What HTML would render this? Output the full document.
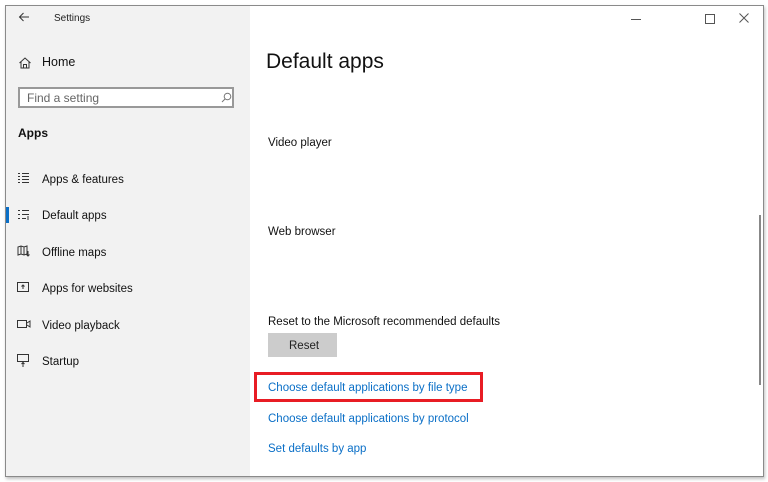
<!DOCTYPE html>
<html><head><meta charset="utf-8"><style>
body{margin:0;width:768px;height:482px;background:#fff;position:relative;overflow:hidden;font-family:"Liberation Sans",sans-serif;}
.win{position:absolute;left:5px;top:5px;width:757px;height:470px;border:1px solid #8a8a8a;background:#fff;box-shadow:1px 2px 3px rgba(0,0,0,.25);}
.side{position:absolute;left:6px;top:6px;width:244px;height:470px;background:#f2f2f2;}
.t{position:absolute;white-space:nowrap;color:#111;}
.s{font-size:11.5px;margin-top:2px;}
.lk{color:#0a6fc7;font-size:11.5px;margin-top:2px;}
svg{position:absolute;}
</style></head><body>
<div class="win"></div>
<div class="side"></div>
<svg style="left:18px;top:12px" width="12" height="10" viewBox="0 0 12 10"><path d="M11 5H1.5M5.5 1L1.5 5L5.5 9" fill="none" stroke="#333" stroke-width="1"/></svg>
<div class="t" style="left:54px;top:13px;font-size:10px;color:#222">Settings</div>
<svg style="left:18px;top:56px" width="14" height="14" viewBox="0 0 14 14"><path d="M1.5 7 L7 2 L12.5 7 M3 6 V12 H11 V6 M5.5 12 V8.5 H8.5 V12" fill="none" stroke="#333" stroke-width="1"/></svg>
<div class="t" style="left:42px;top:55px;font-size:12.5px">Home</div>
<div style="position:absolute;left:18px;top:87px;width:216px;height:21px;border:2px solid #999;background:#fff;box-sizing:border-box"></div>
<div class="t" style="left:27px;top:91px;font-size:12px;color:#666">Find a setting</div>
<svg style="left:221px;top:92px" width="11" height="11" viewBox="0 0 11 11"><circle cx="6.5" cy="4.5" r="3.3" fill="none" stroke="#777"/><path d="M4 7L1 10" stroke="#777"/></svg>
<div class="t" style="left:18px;top:126px;font-size:12px;font-weight:bold">Apps</div>
<div style="position:absolute;left:6px;top:207px;width:3px;height:16px;background:#0a6fc7"></div>
<svg style="left:17px;top:172px" width="13" height="12" viewBox="0 0 13 12"><path d="M1 1.5h2M1 4.5h2M1 7.5h2M1 10.5h2M5 1.5h7M5 4.5h7M5 7.5h7M5 10.5h7" stroke="#333"/></svg>
<div class="t s" style="left:42px;top:172px">Apps &amp; features</div>
<svg style="left:17px;top:209px" width="13" height="12" viewBox="0 0 13 12"><path d="M1 1.5h2M1 5.5h2M1 9.5h2M5 1.5h7M5 5.5h7M5 9.5h4M11 7v4" stroke="#333"/></svg>
<div class="t s" style="left:42px;top:208px">Default apps</div>
<svg style="left:17px;top:245px" width="14" height="12" viewBox="0 0 14 12"><path d="M1 2v8l3-1 3 1 3-1V1L7 2 4 1zM4 1v8M7 2v8M11 6v5M9.5 9.5l1.5 1.5 1.5-1.5" fill="none" stroke="#333"/></svg>
<div class="t s" style="left:42px;top:245px">Offline maps</div>
<svg style="left:17px;top:282px" width="12" height="10" viewBox="0 0 12 10"><rect x="0.5" y="0.5" width="11" height="9" fill="none" stroke="#333"/><path d="M6 7V3M4.5 4.5L6 3l1.5 1.5" fill="none" stroke="#333"/></svg>
<div class="t s" style="left:42px;top:281px">Apps for websites</div>
<svg style="left:17px;top:320px" width="14" height="8" viewBox="0 0 14 8"><rect x="0.5" y="0.5" width="9" height="7" fill="none" stroke="#333"/><path d="M10 3l3-2v6l-3-2" fill="none" stroke="#333"/></svg>
<div class="t s" style="left:42px;top:318px">Video playback</div>
<svg style="left:17px;top:354px" width="12" height="14" viewBox="0 0 12 14"><rect x="0.5" y="0.5" width="11" height="7" fill="none" stroke="#333"/><path d="M6 8v5M4.5 10L6 8.5 7.5 10" fill="none" stroke="#333"/></svg>
<div class="t s" style="left:42px;top:354px">Startup</div>

<div style="position:absolute;left:631px;top:19px;width:10px;height:1px;background:#555"></div>
<div style="position:absolute;left:705px;top:14px;width:8px;height:8px;border:1px solid #555"></div>
<svg style="left:739px;top:13px" width="10" height="10" viewBox="0 0 10 10"><path d="M0.5 0.5L9.5 9.5M9.5 0.5L0.5 9.5" stroke="#555"/></svg>

<div class="t" style="left:266px;top:50px;font-size:21px;color:#111">Default apps</div>
<div class="t s" style="left:268px;top:135px">Video player</div>
<div class="t s" style="left:268px;top:224px">Web browser</div>
<div class="t s" style="left:268px;top:314px">Reset to the Microsoft recommended defaults</div>
<div style="position:absolute;left:268px;top:333px;width:69px;height:24px;background:#ccc"></div>
<div class="t s" style="left:289px;top:338px;color:#222">Reset</div>
<div style="position:absolute;left:254px;top:372px;width:229px;height:30px;border:3px solid #e81c24;box-sizing:border-box"></div>
<div class="t lk" style="left:268px;top:380px">Choose default applications by file type</div>
<div class="t lk" style="left:268px;top:411px">Choose default applications by protocol</div>
<div class="t lk" style="left:268px;top:441px">Set defaults by app</div>
<div style="position:absolute;left:759px;top:215px;width:2px;height:170px;background:#888"></div>
</body></html>
